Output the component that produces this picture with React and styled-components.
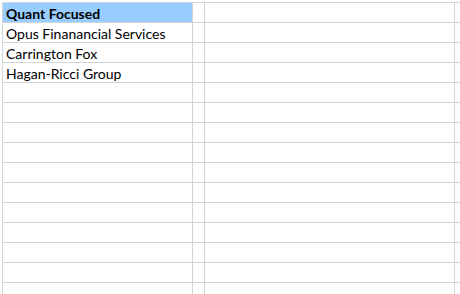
import React from "react";
import styled, { createGlobalStyle } from "styled-components";

const GlobalStyle = createGlobalStyle`
  html, body {
    margin: 0;
    padding: 0;
    background: #ffffff;
    overflow: hidden;
  }
`;

// sheet area
const Page = styled.div`
  width: 460px;
  height: 294px;
  padding: 2px 0 0 2px;
  box-sizing: border-box;
  overflow: hidden;
  background: #ffffff;
`;

const Sheet = styled.div`
  display: grid;
  grid-template-columns: 189px 11px 249px 40px;
  grid-auto-rows: 19px;
  gap: 1px;
  padding: 1px 0 0 1px;
  background: #d4d4d4;
  width: max-content;
  font-family: Lato, "Liberation Sans", sans-serif;
  font-size: 14px;
  color: #000000;
`;

const Cell = styled.div`
  background: ${(props) => (props.$header ? "#99ccff" : "#ffffff")};
  font-weight: ${(props) => (props.$header ? 700 : 400)};
  padding: 1px 0 0 3px;
  box-sizing: border-box;
  line-height: 19px;
  white-space: nowrap;
  overflow: hidden;
`;

const rows = [
  { name: "Quant Focused", header: true },
  { name: "Opus Finanancial Services" },
  { name: "Carrington Fox" },
  { name: "Hagan-Ricci Group" },
];

export default function App() {
  const allRows = [...rows];
  while (allRows.length < 15) allRows.push({ name: "" });

  return (
    <Page>
      <GlobalStyle />
      <Sheet>
        {allRows.map((row, index) => (
          <React.Fragment key={index}>
            <Cell $header={row.header}>{row.name}</Cell>
            <Cell />
            <Cell />
            <Cell />
          </React.Fragment>
        ))}
      </Sheet>
    </Page>
  );
}
